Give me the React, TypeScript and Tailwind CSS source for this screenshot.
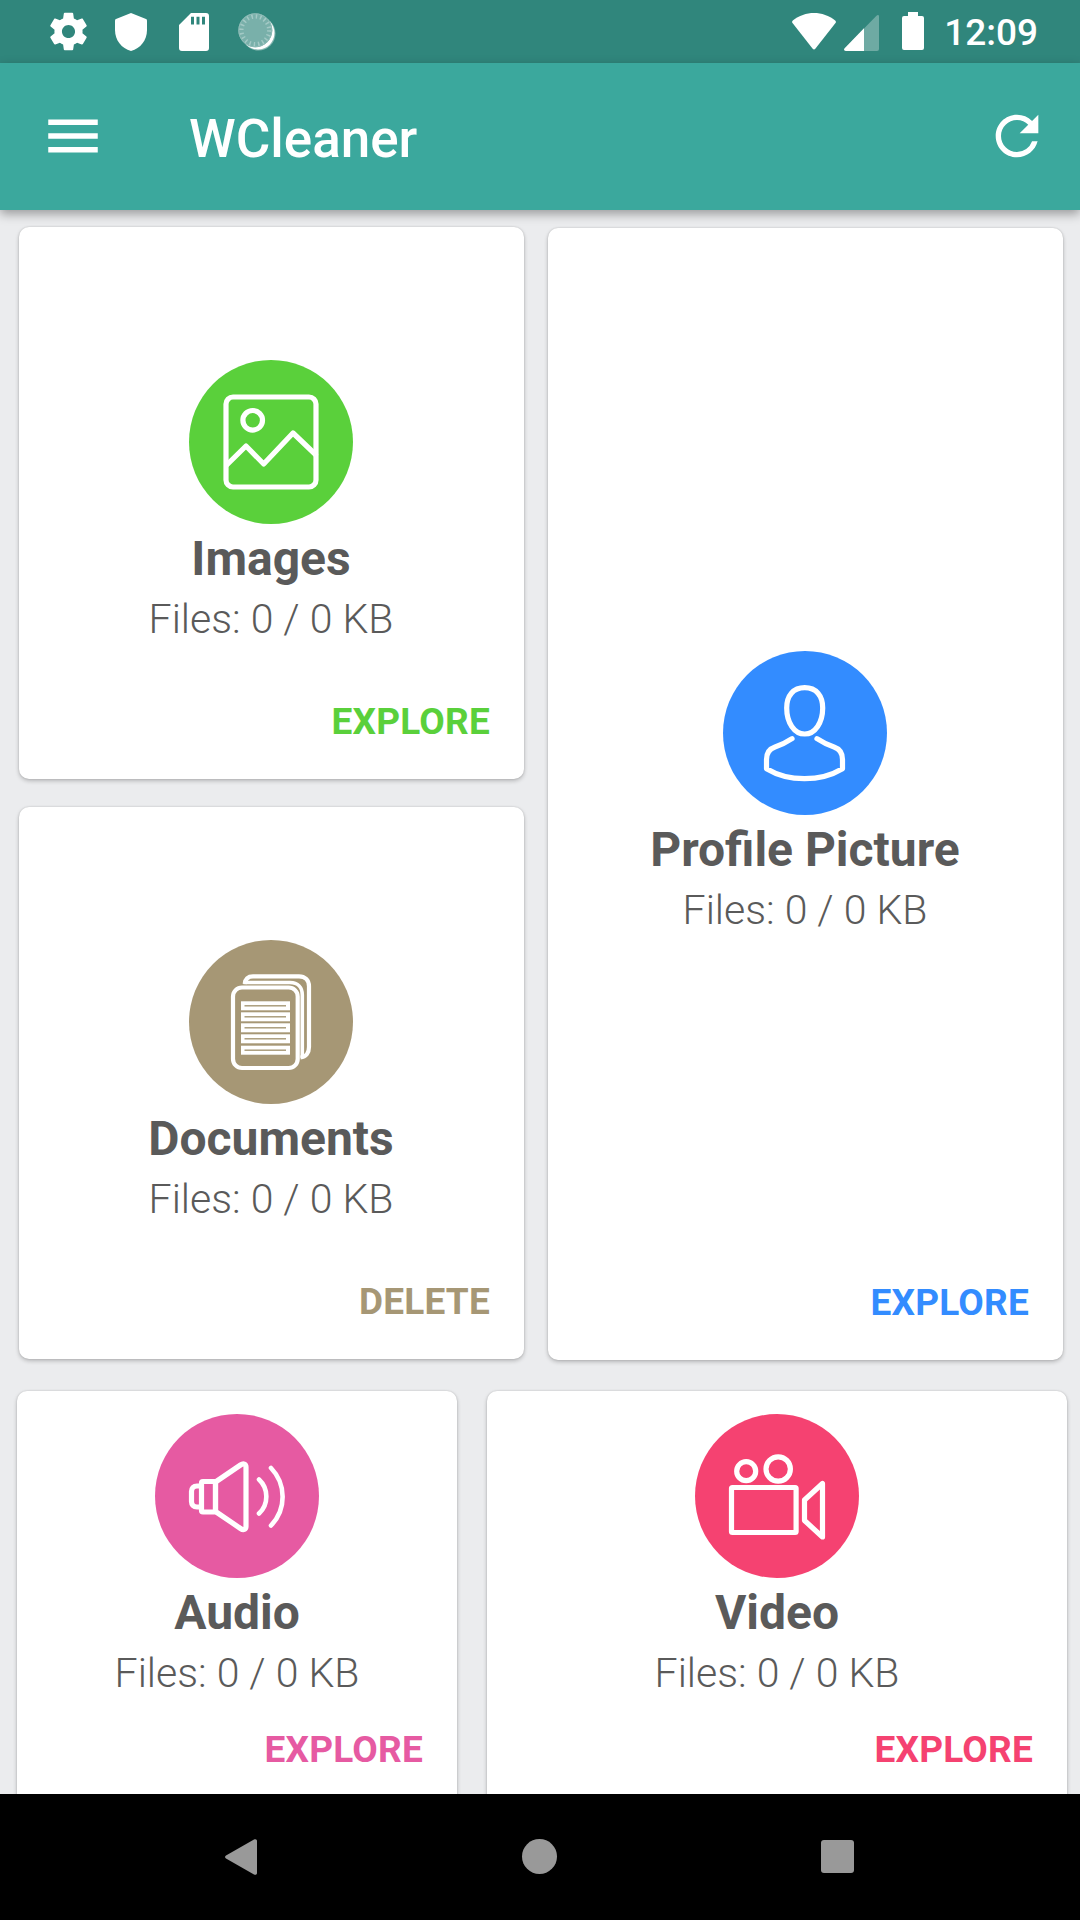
import type { ReactNode } from "react";
import { MdMenu, MdRefresh } from "react-icons/md";

interface FileCardProps {
  title: string;
  action: string;
  circle: string;
  actionColor: string;
  className?: string;
  bodyClass?: string;
  actionClass?: string;
  icon: ReactNode;
}

const cardShadow = "shadow-[0_2px_4px_rgba(0,0,0,0.22),0_0_2px_rgba(0,0,0,0.16)]";

function FileCard({ title, action, circle, actionColor, className, bodyClass, actionClass, icon }: FileCardProps) {
  return (
    <section className={`grid rounded-[10px] bg-white ${cardShadow} ${className ?? ""}`}>
      <div className={`col-start-1 row-start-1 flex flex-col items-center ${bodyClass ?? "self-center pr-px pb-[2px]"}`}>
        <div className={`size-[164px] rounded-full ${circle}`}>
          <svg
            viewBox="0 0 164 164"
            className="size-full"
            fill="none"
            stroke="white"
            strokeWidth="5.2"
            strokeLinecap="round"
            strokeLinejoin="round"
          >
            {icon}
          </svg>
        </div>
        <h2 className="mt-[7px] text-[48px] leading-[56px] font-bold whitespace-nowrap">{title}</h2>
        <p className="mt-2 text-[41px] leading-[49px] font-light whitespace-nowrap">Files: 0 / 0 KB</p>
      </div>
      <button
        className={`col-start-1 row-start-1 justify-self-end text-[37px] leading-[44px] font-bold tracking-[0.2px] ${actionColor} ${actionClass ?? "mr-[34px] mb-[35px] self-end"}`}
      >
        {action}
      </button>
    </section>
  );
}

const imageIcon = (
  <>
    <rect x="37" y="37" width="90" height="90" rx="7" />
    <circle cx="63.7" cy="60.3" r="9.8" />
    <path d="M37.7 105 57 86l17.7 18L104 73l22.5 21.5" />
  </>
);

const profileIcon = (
  <>
    <path d="M81.7 36.7c11.5 0 18 8 18 20.3 0 14.5-7.5 26-18 26s-18-11.5-18-26c0-12.3 6.5-20.3 18-20.3Z" />
    <path d="M69 87.7c-5 3.3-10.5 6.3-17 8.3-6 2-8.5 6.5-8.5 12.5v9.2c10.5 6.3 24 10 38 10s27.5-3.7 38-10v-9.2c0-6-2.5-10.5-8.5-12.5-6.5-2-12-5-17-8.3" />
  </>
);

const documentIcon = (
  <>
    <g strokeWidth="4.2" strokeLinecap="butt">
      <rect x="44" y="47.5" width="64.7" height="80.5" rx="9" />
      <path d="M55.7 44c.5-5 3.3-7.7 8.3-7.7h46c6 0 10 4 10 10V107c0 6-3 10-8.5 10.5" />
      <path d="M54.5 42.5H101c8 0 12.3 5 12.3 12.5V118" strokeWidth="3.6" />
    </g>
    {[61.3, 72.3, 83.3, 94.3, 105.7].map((y) => (
      <g key={y} stroke="none">
        <rect x="52" y={y} width="49" height="9" fill="white" />
        <rect x="55.5" y={y + 3.8} width="41.5" height="1.4" fill="#a69775" />
      </g>
    ))}
  </>
);

const audioIcon = (
  <>
    <path d="M46 72h-4c-3.5 0-5.5 2.5-5.5 5.5v10c0 3 2 5.5 5.5 5.5h4" />
    <rect x="46.5" y="67.5" width="14" height="30.5" rx="1.5" />
    <path d="M60.5 68 85.5 51c3-2 5.5-1 5.5 2v59.5c0 3-2.5 4-5.5 2L60.5 97.5Z" />
    <path d="M104 65.5c9.8 9 9.8 25 0 34M116 54c15.5 16 15.5 41.5 0 57.5" strokeWidth="4.6" />
  </>
);

const videoIcon = (
  <>
    <circle cx="51.2" cy="57.2" r="9.5" />
    <circle cx="83.2" cy="55" r="12.2" />
    <rect x="36.5" y="73.5" width="64.6" height="45" rx="1" />
    <path d="M127.5 69.5v53.5L109.5 106.5V86Z" />
  </>
);

function StatusBar() {
  return (
    <div className="flex h-[63px] items-start bg-[#30867c] text-white">
      <svg viewBox="0 0 24 24" className="mt-[9px] ml-[46px] size-[45px]" fill="currentColor">
        <path d="M19.43 12.98c.04-.32.07-.64.07-.98s-.03-.66-.07-.98l2.11-1.65c.19-.15.24-.42.12-.64l-2-3.46c-.12-.22-.39-.3-.61-.22l-2.49 1c-.52-.4-1.08-.73-1.69-.98l-.38-2.65C14.46 2.18 14.25 2 14 2h-4c-.25 0-.46.18-.49.42l-.38 2.65c-.61.25-1.17.59-1.69.98l-2.49-1c-.23-.09-.49 0-.61.22l-2 3.46c-.13.22-.07.49.12.64l2.11 1.65c-.04.32-.07.65-.07.98s.03.66.07.98l-2.11 1.65c-.19.15-.24.42-.12.64l2 3.46c.12.22.39.3.61.22l2.49-1c.52.4 1.08.73 1.69.98l.38 2.65c.03.24.24.42.49.42h4c.25 0 .46-.18.49-.42l.38-2.65c.61-.25 1.17-.59 1.69-.98l2.49 1c.23.09.49 0 .61-.22l2-3.46c.12-.22.07-.49-.12-.64l-2.11-1.65zM12 15.5c-1.93 0-3.5-1.57-3.5-3.5s1.57-3.5 3.5-3.5 3.5 1.57 3.5 3.5-1.57 3.5-3.5 3.5z" />
      </svg>
      <svg viewBox="0 0 32 38" className="mt-[12.5px] ml-6 h-[38px] w-8" fill="currentColor">
        <path d="M16 0 31 6c.6.3 1 .8 1 1.5V17c0 10-6.5 18.5-16 21C6.5 35.5 0 27 0 17V7.5C0 6.8.4 6.3 1 6Z" />
      </svg>
      <svg viewBox="0 0 30 38" className="mt-[12.5px] ml-8 h-[38px] w-[30px]" fill="currentColor">
        <path
          fillRule="evenodd"
          d="M12 0h15a3 3 0 0 1 3 3v32a3 3 0 0 1-3 3H3a3 3 0 0 1-3-3V12ZM12 3.8v7.7h3V3.8Zm5.5 0v7.7h3V3.8Zm5.5 0v7.7h3V3.8Z"
        />
      </svg>
      <svg viewBox="0 0 38 38" className="mt-[12.5px] ml-[29px] size-[38px]">
        <circle cx="20.5" cy="20.5" r="17" fill="white" opacity=".4" />
        <circle cx="20" cy="20" r="16.5" fill="white" />
        <circle cx="17.3" cy="17.3" r="17" fill="#79b0aa" />
        <circle cx="17.3" cy="17.3" r="14" fill="none" stroke="#a3c9c5" strokeWidth="4.5" strokeDasharray="1.5 2.9" />
        <circle cx="17.3" cy="17.3" r="16.5" fill="none" stroke="#8fbcb7" strokeWidth="1" />
      </svg>
      <svg viewBox="0 0 44 37" className="mt-[12.5px] ml-auto h-[37px] w-11" fill="currentColor">
        <path d="M.8 7.5C13-2.5 31-2.5 43.2 7.5c.8.7 1 1.6.3 2.5L23.3 35.8c-.8 1-1.8 1-2.6 0L.5 10c-.7-.9-.5-1.8.3-2.5Z" />
      </svg>
      <svg viewBox="0 0 35 36" className="mt-[14.5px] ml-2 h-9 w-[35px]" fill="currentColor">
        <path d="M32.5.8C33.8-.5 35 0 35 1.5V34a2 2 0 0 1-2 2H2c-2 0-2.5-1.5-1.3-2.8Z" opacity=".3" />
        <path d="M20 13.2V36H2c-2 0-2.5-1.5-1.3-2.8Z" />
      </svg>
      <svg viewBox="0 0 22 38" className="mt-3 ml-[23px] h-[38px] w-[22px]" fill="currentColor">
        <path d="M6 0h10v4h4a2 2 0 0 1 2 2v30a2 2 0 0 1-2 2H2a2 2 0 0 1-2-2V6a2 2 0 0 1 2-2h4Z" />
      </svg>
      <span className="mt-[10px] mr-[42px] ml-5 text-[37px] leading-[45px] font-medium">12:09</span>
    </div>
  );
}

function Toolbar() {
  return (
    <header className="relative z-10 flex h-[147px] items-center bg-[#3ba89d] text-white shadow-[0_4px_10px_rgba(0,0,0,0.35)]">
      <MdMenu className="mb-[2px] ml-10 size-[66px]" />
      <h1 className="mt-[5px] ml-[83px] text-[53px] leading-[64px] font-medium">WCleaner</h1>
      <MdRefresh className="mr-[31px] mb-[2px] ml-auto size-16" />
    </header>
  );
}

export default function App() {
  return (
    <div className="flex h-[1920px] w-[1080px] flex-col overflow-hidden bg-[#ebecee] font-[Roboto,sans-serif] text-[#5a5a5a]">
      <StatusBar />
      <Toolbar />

      <main className="flex h-[1584px] flex-col overflow-hidden pt-[17px]">
        <div className="flex pl-[19px]">
          <div className="flex w-[505px] flex-col gap-7">
            <FileCard
              title="Images"
              action="EXPLORE"
              circle="bg-[#5ad03b]"
              actionColor="text-[#5ad03b]"
              className="h-[552px]"
              icon={imageIcon}
            />
            <FileCard
              title="Documents"
              action="DELETE"
              circle="bg-[#a69775]"
              actionColor="text-[#a69775]"
              className="h-[552px]"
              icon={documentIcon}
            />
          </div>
          <FileCard
            title="Profile Picture"
            action="EXPLORE"
            circle="bg-[#338cff]"
            actionColor="text-[#338cff]"
            className="mt-px ml-6 h-[1132px] w-[515px]"
            icon={profileIcon}
          />
        </div>

        <div className="mt-[31px] flex gap-[30px] pl-[17px]">
          <FileCard
            title="Audio"
            action="EXPLORE"
            circle="bg-[#e65aa2]"
            actionColor="text-[#e65aa2]"
            className="h-[460px] w-[440px]"
            bodyClass="self-start pt-[23px]"
            actionClass="mt-[337px] mr-[34px] self-start"
            icon={audioIcon}
          />
          <FileCard
            title="Video"
            action="EXPLORE"
            circle="bg-[#f54271]"
            actionColor="text-[#f54271]"
            className="h-[460px] w-[580px]"
            bodyClass="self-start pt-[23px]"
            actionClass="mt-[337px] mr-[34px] self-start"
            icon={videoIcon}
          />
        </div>
      </main>

      <nav className="flex h-[126px] items-center bg-black pb-px text-[#999]">
        <svg viewBox="0 0 32 36" className="ml-[225px] h-9 w-8" fill="currentColor">
          <path d="M29 .6c1.5-1 3-.3 3 1.4v32c0 1.7-1.5 2.4-3 1.4L1 19.5c-1.3-.8-1.3-2.2 0-3Z" />
        </svg>
        <div className="ml-[265px] size-[35px] rounded-full bg-[#999]" />
        <div className="ml-[264px] size-[33px] rounded-[3px] bg-[#999]" />
      </nav>
    </div>
  );
}
